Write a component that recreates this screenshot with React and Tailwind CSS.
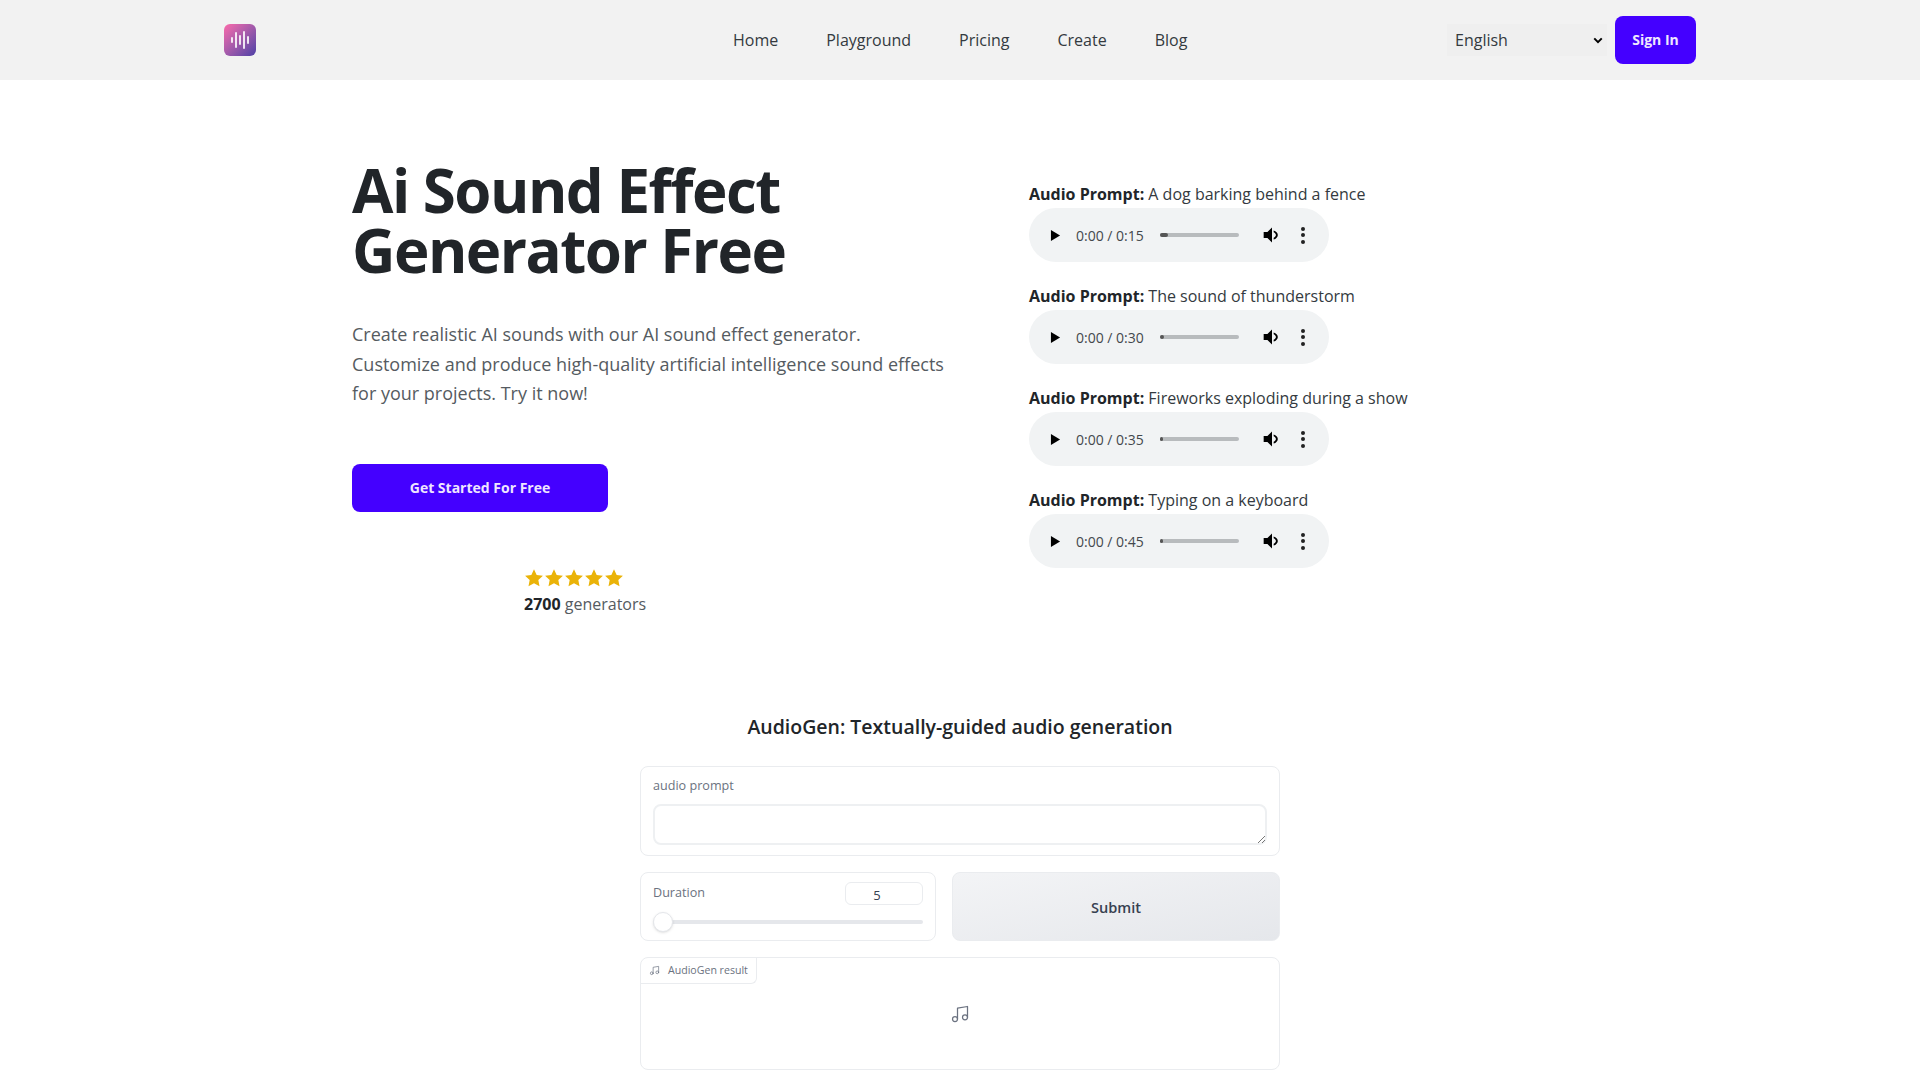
import { Music } from 'lucide-react'

const font = { fontFamily: '"Open Sans", sans-serif' }

const navLinks = ['Home', 'Playground', 'Pricing', 'Create', 'Blog']

const samples = [
  { prompt: 'A dog barking behind a fence', total: '0:15', progress: 'w-[8px]' },
  { prompt: 'The sound of thunderstorm', total: '0:30', progress: 'w-[4px]' },
  { prompt: 'Fireworks exploding during a show', total: '0:35', progress: 'w-[3px]' },
  { prompt: 'Typing on a keyboard', total: '0:45', progress: 'w-[3px]' },
]

function Logo() {
  return (
    <div className="w-8 h-8 rounded-md bg-gradient-to-br from-[#fb69aa] to-[#4f3fa6] flex items-center justify-center gap-[2px]">
      <span className="w-[2px] h-[6px] bg-white/85 rounded-full" />
      <span className="w-[2px] h-[16px] bg-white/85 rounded-full" />
      <span className="w-[2px] h-[10px] bg-white/85 rounded-full" />
      <span className="w-[2px] h-[18px] bg-white/85 rounded-full" />
      <span className="w-[2px] h-[8px] bg-white/85 rounded-full" />
    </div>
  )
}

function Star() {
  return (
    <svg viewBox="0 0 24 24" className="w-[20px] h-[20px] fill-[#eab308]">
      <path d="M12 1.5l3.2 6.9 7.5.9-5.5 5.2 1.4 7.5L12 18.3l-6.6 3.7 1.4-7.5L1.3 9.3l7.5-.9z" />
    </svg>
  )
}

function AudioPlayer({ total, progress }) {
  return (
    <div className="w-[300px] h-[54px] rounded-full bg-[#f1f3f4] flex items-center pl-[21px] text-[#1f2328]">
      <svg viewBox="0 0 12 14" className="w-[11px] h-[13px] fill-black">
        <path d="M1 1l10 6-10 6z" />
      </svg>
      <span className="ml-[15px] w-[69px] text-[14px] whitespace-nowrap text-[#44484d]">0:00 / {total}</span>
      <div className="ml-[15px] w-[79px] h-[4px] rounded-full bg-[#b8bbbd]">
        <div className={`${progress} h-[4px] rounded-full bg-[#555]`} />
      </div>
      <svg viewBox="0 0 24 24" className="ml-[23px] w-[20px] h-[20px] fill-black">
        <path d="M2 8.5v7h4.5L12 21V3L6.5 8.5zM14 6.5v2.2c1.6.7 2.7 1.9 2.7 3.3s-1.1 2.6-2.7 3.3v2.2c2.8-.8 5-3 5-5.5s-2.2-4.7-5-5.5z" />
      </svg>
      <div className="ml-[19px] flex flex-col gap-[2.5px]">
        <span className="w-[4px] h-[4px] rounded-full bg-[#222]" />
        <span className="w-[4px] h-[4px] rounded-full bg-[#222]" />
        <span className="w-[4px] h-[4px] rounded-full bg-[#222]" />
      </div>
    </div>
  )
}

export default function App() {
  return (
    <div className="h-[1080px] overflow-hidden bg-white text-[#212529]" style={font}>
      <header className="h-[80px] bg-[#f2f2f2] px-[224px] flex items-center">
        <Logo />
        <nav className="ml-[477px] flex gap-[48px] text-[16px] text-[#343a40]">
          {navLinks.map((link) => (
            <a key={link}>{link}</a>
          ))}
        </nav>
        <div className="ml-auto flex items-center gap-[8px]">
          <div className="w-[160px] h-[32px] bg-[#efefef] pl-[8px] pr-[4px] flex items-center justify-between text-[16px] text-[#343a40]">
            English
            <svg viewBox="0 0 12 12" className="w-[10px] h-[10px] fill-none stroke-black stroke-[2.4]">
              <path d="M1.5 4l4.5 4.5L10.5 4" />
            </svg>
          </div>
          <button className="w-[81px] h-[48px] pb-[1px] rounded-lg bg-[#4400ff] text-[#efe6ff] text-[14px] font-bold">Sign In</button>
        </div>
      </header>

      <main className="w-[1216px] mx-auto">
        <section className="flex h-[560px]">
          <div className="w-[677px] pt-[80px]">
            <h1 className="text-[60px] leading-[60px] font-bold tracking-[-1.5px] text-[#212529]">
              Ai Sound Effect
              <br />
              Generator Free
            </h1>
            <p className="mt-[40px] w-[596px] text-[18px] leading-[29.7px] text-[#555b61]">
              Create realistic AI sounds with our AI sound effect generator. Customize and produce high-quality artificial intelligence sound effects for your projects. Try it now!
            </p>
            <button className="mt-[55px] block w-[256px] h-[48px] pb-[1px] rounded-lg bg-[#4400ff] text-[#efe6ff] text-[14px] font-bold">
              Get Started For Free
            </button>
            <div className="mt-[56px] ml-[172px]">
              <div className="flex">
                <Star />
                <Star />
                <Star />
                <Star />
                <Star />
              </div>
              <p className="mt-[4px] text-[16px] text-[#555b61]">
                <b className="text-[#212529]">2700</b> generators
              </p>
            </div>
          </div>
          <div className="pt-[102px] flex flex-col gap-[22px]">
            {samples.map((s) => (
              <div key={s.prompt}>
                <p className="text-[16px] leading-[24px] mb-[2px] text-[#343a40]">
                  <b className="text-[#212529]">Audio Prompt:</b> {s.prompt}
                </p>
                <AudioPlayer total={s.total} progress={s.progress} />
              </div>
            ))}
          </div>
        </section>

        <section className="w-[640px] mx-auto">
          <h2 className="-mx-[100px] text-center text-[19.5px] leading-[28px] font-semibold text-[#212529] mt-[73px]">
            AudioGen: Textually-guided audio generation
          </h2>

          <div className="mt-[25px] h-[90px] rounded-lg border border-[#eaecef] px-[12px] pt-[9px]">
            <p className="text-[12.6px] leading-[20px] text-[#6b7280]">audio prompt</p>
            <div className="relative mt-[8px] h-[41px] rounded-lg border-2 border-[#eef0f2]">
              <svg viewBox="0 0 10 10" className="absolute -right-px -bottom-px w-[10px] h-[10px] stroke-[#777] fill-none">
                <path d="M9 2L2 9M9 6L6 9" />
              </svg>
            </div>
          </div>

          <div className="mt-[16px] flex gap-[16px]">
            <div className="w-[296px] h-[69px] rounded-lg border border-[#eaecef] px-[12px] pt-[9px]">
              <div className="flex items-start justify-between">
                <span className="mt-[1px] text-[12.6px] leading-[20px] text-[#6b7280]">Duration</span>
                <span className="w-[78px] h-[23px] pr-[14px] rounded-md border border-[#eaecef] text-center text-[13px] leading-[24px] text-[#374151]">5</span>
              </div>
              <div className="relative mt-[15px] h-[4px] rounded-full bg-[#e5e7eb]">
                <span className="absolute left-0 -top-[8px] w-[20px] h-[20px] rounded-full bg-white border border-[#e5e7eb] shadow-sm" />
              </div>
            </div>
            <button className="flex-1 h-[69px] pt-[2px] rounded-lg bg-gradient-to-br from-[#f3f4f6] to-[#e5e7eb] border border-[#eaecef] text-[#374151] text-[14.6px] font-semibold">
              Submit
            </button>
          </div>

          <div className="relative mt-[16px] h-[113px] rounded-lg border border-[#eaecef] flex items-center justify-center">
            <div className="absolute left-0 top-0 h-[26px] pl-[8px] pr-[8px] rounded-br-md rounded-tl-lg border-r border-b border-[#eaecef] flex items-center gap-[8px] text-[10.6px] text-[#6b7280]">
              <Music size={11} strokeWidth={1.5} />
              AudioGen result
            </div>
            <Music size={20} strokeWidth={1.5} className="text-[#6b7280]" />
          </div>
        </section>
      </main>
    </div>
  )
}
